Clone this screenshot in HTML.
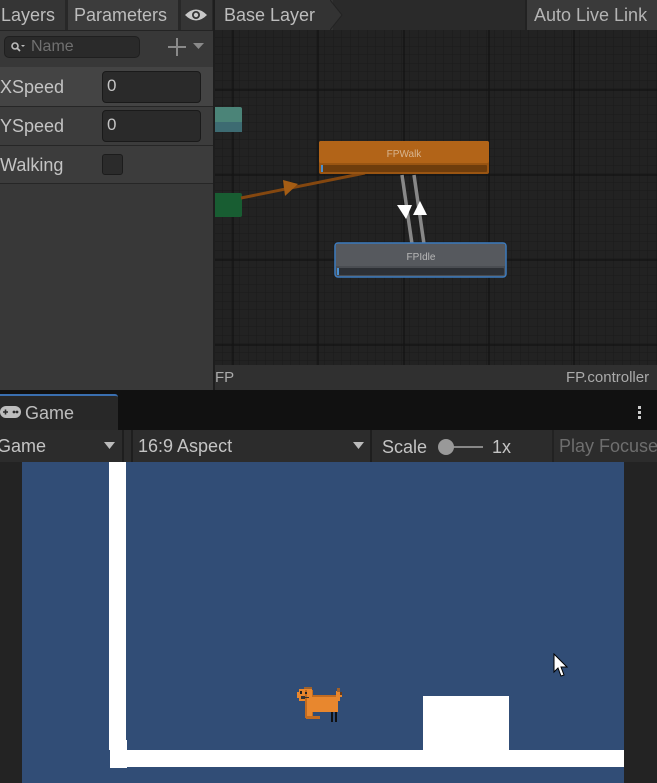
<!DOCTYPE html>
<html><head><meta charset="utf-8"><style>
*{margin:0;padding:0;box-sizing:border-box}
body{width:657px;height:783px;overflow:hidden;background:#282828;font-family:"Liberation Sans",sans-serif;color:#c4c4c4;position:relative}
.a{position:absolute}
.t{font-size:18px;white-space:nowrap}
</style></head><body>
<div class="a" style="left:0;top:0;width:213px;height:30px;background:#282828"></div>
<div class="a" style="left:0;top:0;width:65px;height:30px;background:#353535"></div>
<div class="a t" style="left:1px;top:5px;color:#bdbdbd">Layers</div>
<div class="a" style="left:68px;top:0;width:110px;height:30px;background:#3c3c3c"></div>
<div class="a t" style="left:74px;top:5px;color:#bdbdbd">Parameters</div>
<div class="a" style="left:181px;top:0;width:31px;height:30px;background:#353535"></div>
<svg class="a" style="left:184px;top:7px" width="24" height="16"><path d="M1 8 Q12 -3 23 8 Q12 19 1 8Z" fill="#c8c8c8"/><circle cx="12" cy="8" r="4" fill="#353535"/><circle cx="12" cy="8" r="2.2" fill="#c8c8c8"/></svg>
<div class="a" style="left:213px;top:0;width:2px;height:390px;background:#1e1e1e"></div>
<div class="a" style="left:215px;top:0;width:442px;height:30px;background:#2a2a2a"></div>
<div class="a" style="left:215px;top:0;width:118px;height:30px;background:#333"></div>
<svg class="a" style="left:330px;top:0" width="14" height="30"><path d="M0 0 L12 15 L0 30Z" fill="#333"/><path d="M0 0 L12 15 L0 30" fill="none" stroke="#222"/></svg>
<div class="a t" style="left:224px;top:5px;color:#bdbdbd">Base Layer</div>
<div class="a" style="left:525px;top:0;width:2px;height:30px;background:#222"></div>
<div class="a" style="left:527px;top:0;width:130px;height:30px;background:#3a3a3a"></div>
<div class="a t" style="left:534px;top:5px;color:#b4b4b4">Auto Live Link</div>
<div class="a" style="left:0;top:30px;width:213px;height:360px;background:#383838"></div>
<div class="a" style="left:0;top:30px;width:213px;height:1px;background:#242424"></div>
<div class="a" style="left:4px;top:36px;width:136px;height:22px;background:#2a2a2a;border:1px solid #1f1f1f;border-radius:5px"></div>
<svg class="a" style="left:10px;top:41px" width="16" height="12"><circle cx="5" cy="5" r="3" fill="none" stroke="#bbb" stroke-width="1.6"/><path d="M7 7 L10 10" stroke="#bbb" stroke-width="1.8"/><path d="M11 4 L15 4 L13 6Z" fill="#bbb"/></svg>
<div class="a" style="left:31px;top:38px;font-size:16px;color:#707070">Name</div>
<div class="a" style="left:168px;top:46px;width:18px;height:2px;background:#8a8a8a"></div>
<div class="a" style="left:176px;top:38px;width:2px;height:18px;background:#8a8a8a"></div>
<svg class="a" style="left:193px;top:43px" width="12" height="8"><path d="M0 0 L11 0 L5.5 6Z" fill="#8a8a8a"/></svg>
<div class="a" style="left:0;top:67px;width:213px;height:39px;background:#444"></div>
<div class="a" style="left:0;top:106px;width:213px;height:1px;background:#262626"></div>
<div class="a" style="left:0;top:107px;width:213px;height:38px;background:#3c3c3c"></div>
<div class="a" style="left:0;top:145px;width:213px;height:1px;background:#262626"></div>
<div class="a" style="left:0;top:146px;width:213px;height:37px;background:#3c3c3c"></div>
<div class="a" style="left:0;top:183px;width:213px;height:1px;background:#262626"></div>
<div class="a t" style="left:0;top:77px;font-size:18px">XSpeed</div>
<div class="a t" style="left:0;top:116px;font-size:18px">YSpeed</div>
<div class="a t" style="left:0;top:155px;font-size:18px">Walking</div>
<div class="a" style="left:102px;top:71px;width:99px;height:32px;background:#2a2a2a;border:1px solid #1a1a1a;border-radius:4px"></div>
<div class="a" style="left:102px;top:110px;width:99px;height:32px;background:#2a2a2a;border:1px solid #1a1a1a;border-radius:4px"></div>
<div class="a t" style="left:107px;top:76px;font-size:17px">0</div>
<div class="a t" style="left:107px;top:115px;font-size:17px">0</div>
<div class="a" style="left:102px;top:154px;width:21px;height:21px;background:#2b2b2b;border:1px solid #1c1c1c;border-radius:3px"></div>
<svg class="a" style="left:215px;top:30px" width="442" height="335">
<defs><pattern id="m" x="-1" y="-1" width="8.5" height="8.5" patternUnits="userSpaceOnUse"><path d="M0 0 H8.5 M0 0 V8.5" stroke="#1a1a1a" stroke-width="1"/></pattern></defs>
<rect width="442" height="335" fill="#222"/>
<rect width="442" height="335" fill="url(#m)"/>
<g stroke="#141414" stroke-width="1.5">
<path d="M18 0V335M103 0V335M189 0V335M274 0V335M359 0V335M444 0V335"/>
<path d="M0 60H442M0 145H442M0 230H442M0 315H442"/>
</g>
<rect x="-2" y="77" width="29" height="25" rx="2" fill="#4b8478"/>
<rect x="-2" y="92" width="29" height="10" fill="#3d6b72"/>
<rect x="-2" y="163" width="29" height="24" rx="2" fill="#185d32"/>
<path d="M26 168 L150 143" stroke="#84470f" stroke-width="3"/>
<path d="M68 150 L83 154 L70 166Z" fill="#a55d14"/>
<path d="M187 145 L197 214 M199 145 L209 214" stroke="#888" stroke-width="3.5"/>
<path d="M182 175 L197 175 L191 189Z" fill="#fff"/>
<path d="M205 171 L212 185 L198 185Z" fill="#fff"/>
<rect x="104" y="111" width="170" height="33" rx="2" fill="#9a5512"/>
<rect x="104" y="111" width="170" height="22" rx="2" fill="#b26418"/>
<rect x="106" y="135" width="166" height="7" rx="1" fill="#6f3d0c"/>
<rect x="106" y="135" width="2" height="7" fill="#4a8fd0"/>
<text x="189" y="127" text-anchor="middle" font-size="10" fill="#d8b58f" font-family="Liberation Sans">FPWalk</text>
<rect x="120" y="213" width="171" height="34" rx="3" fill="#4a4d52" stroke="#3d7cc0" stroke-width="1.5"/>
<rect x="121" y="214" width="169" height="22" fill="#56595e"/>
<rect x="122" y="238" width="167" height="7" rx="1" fill="#2d3035"/>
<rect x="122" y="238" width="2" height="7" fill="#4a8fd0"/>
<text x="206" y="230" text-anchor="middle" font-size="10" fill="#b8b8b8" font-family="Liberation Sans">FPIdle</text>
</svg>
<div class="a" style="left:215px;top:365px;width:442px;height:25px;background:#303030"></div>
<div class="a" style="left:215px;top:369px;font-size:15px;color:#aaa">FP</div>
<div class="a" style="left:566px;top:369px;font-size:15px;color:#aaa;white-space:nowrap">FP.controller</div>
<div class="a" style="left:0;top:390px;width:657px;height:40px;background:#111"></div>
<div class="a" style="left:0;top:394px;width:118px;height:36px;background:#282828;border-top:2px solid #3a6fb0;border-top-right-radius:3px"></div>
<svg class="a" style="left:0;top:406px" width="21" height="12"><rect x="0" y="0" width="21" height="12" rx="6" fill="#bdbdbd"/><path d="M3 6H8M5.5 3.5V8.5" stroke="#282828" stroke-width="1.6"/><circle cx="14" cy="6" r="1.4" fill="#282828"/><circle cx="17" cy="6" r="1.4" fill="#282828"/></svg>
<div class="a t" style="left:25px;top:403px;font-size:18px;color:#bdbdbd">Game</div>
<div class="a" style="left:638px;top:406px;width:3px;height:3px;background:#ccc"></div>
<div class="a" style="left:638px;top:411px;width:3px;height:3px;background:#ccc"></div>
<div class="a" style="left:638px;top:416px;width:3px;height:3px;background:#ccc"></div>
<div class="a" style="left:0;top:430px;width:657px;height:32px;background:#2c2c2c"></div>
<div class="a t" style="left:-3px;top:436px;font-size:18px">Game</div>
<svg class="a" style="left:104px;top:442px" width="12" height="8"><path d="M0 0L11 0L5.5 7Z" fill="#bbb"/></svg>
<div class="a" style="left:122px;top:430px;width:2px;height:32px;background:#1e1e1e"></div>
<div class="a" style="left:131px;top:430px;width:2px;height:32px;background:#1e1e1e"></div>
<div class="a t" style="left:138px;top:436px;font-size:18px">16:9 Aspect</div>
<svg class="a" style="left:353px;top:442px" width="12" height="8"><path d="M0 0L11 0L5.5 7Z" fill="#bbb"/></svg>
<div class="a" style="left:370px;top:430px;width:2px;height:32px;background:#1e1e1e"></div>
<div class="a t" style="left:382px;top:437px;font-size:18px">Scale</div>
<div class="a" style="left:445px;top:446px;width:38px;height:2px;background:#888"></div>
<div class="a" style="left:438px;top:439px;width:16px;height:16px;border-radius:50%;background:#999"></div>
<div class="a t" style="left:492px;top:437px;font-size:18px">1x</div>
<div class="a" style="left:552px;top:430px;width:2px;height:32px;background:#222"></div>
<div class="a t" style="left:559px;top:436px;font-size:18px;color:#6e6e6e">Play Focused</div>
<div class="a" style="left:0;top:462px;width:657px;height:321px;background:#232323"></div>
<div class="a" style="left:22px;top:462px;width:602px;height:321px;background:#314d76"></div>
<div class="a" style="left:109px;top:462px;width:17px;height:288px;background:#fff"></div>
<div class="a" style="left:110px;top:740px;width:17px;height:28px;background:#fff"></div>
<div class="a" style="left:126px;top:750px;width:498px;height:17px;background:#fff"></div>
<div class="a" style="left:423px;top:696px;width:86px;height:54px;background:#fff"></div>
<svg class="a" style="left:296px;top:686px" width="54" height="36" shape-rendering="crispEdges">
<rect x="8" y="1" width="8" height="2" fill="#a0612a"/>
<rect x="3" y="3" width="13" height="12" fill="#e8872e"/>
<rect x="1" y="6" width="3" height="6" fill="#e8872e"/>
<rect x="9" y="4" width="8" height="28" fill="#c26b20"/>
<rect x="11" y="3" width="5" height="28" fill="#e8872e"/>
<rect x="10" y="30" width="14" height="3" fill="#c26b20"/>
<rect x="16" y="9" width="26" height="2" fill="#c26b20"/>
<rect x="16" y="11" width="26" height="15" fill="#e8872e"/>
<rect x="40" y="5" width="4" height="10" fill="#e8872e"/>
<rect x="42" y="7" width="4" height="4" fill="#e8872e"/>
<rect x="41" y="2" width="3" height="4" fill="#a0612a"/>
<rect x="44" y="6" width="2" height="3" fill="#6b3a15"/>
<rect x="4" y="5" width="2" height="3" fill="#222"/>
<rect x="9" y="6" width="2" height="2" fill="#222"/>
<rect x="5" y="10" width="4" height="3" fill="#333"/>
<rect x="7" y="11" width="6" height="1" fill="#333"/>
<rect x="35" y="26" width="2" height="10" fill="#111"/>
<rect x="39" y="26" width="2" height="10" fill="#111"/>
</svg>
<svg class="a" style="left:553px;top:653px" width="20" height="28"><path d="M1 1 L1 19 L5 15 L8 23 L11 22 L8 14 L14 14Z" fill="#fff" stroke="#000" stroke-width="1"/></svg>
</body></html>
